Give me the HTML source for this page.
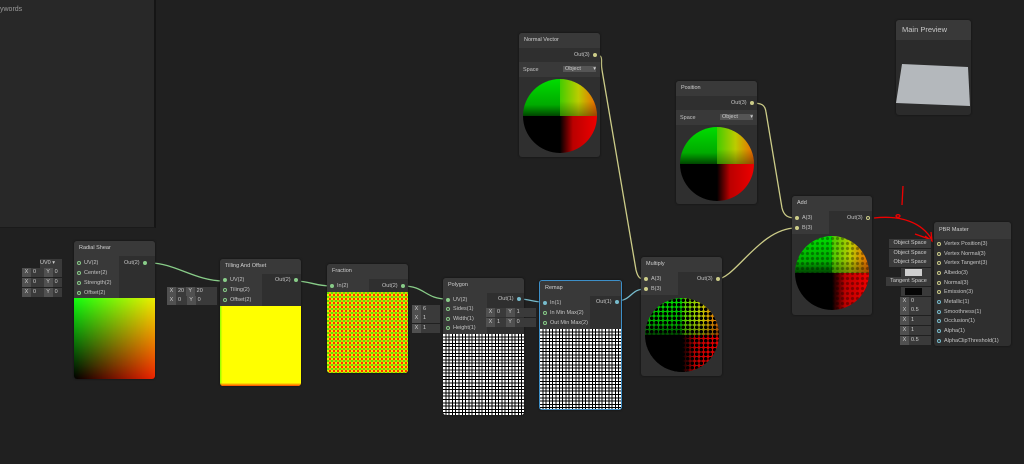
<!DOCTYPE html><html><head><style>
*{margin:0;padding:0;box-sizing:border-box}
body{width:1024px;height:464px;background:#202020;position:relative;overflow:hidden;font-family:"Liberation Sans",sans-serif;font-size:5.5px;color:#c4c4c4}
.a{position:absolute}
.node{position:absolute;background:#2f2f2f;border-radius:3px;overflow:hidden;box-shadow:0 0 2px #111}
.hd{height:15px;background:#393939;line-height:15px;padding-left:5px;color:#d0d0d0;font-size:5.5px}
.in{position:absolute;left:0;background:#393939}
.row{position:absolute;height:10px;line-height:10px;white-space:nowrap}
.p{display:inline-block;width:4px;height:4px;border-radius:50%;border:1px solid #8c8;vertical-align:middle;margin-right:3px}
.pf{background:#8c8}
.py{border-color:#cc8}.pyf{background:#cc8;border-color:#cc8}
.pb{border-color:#7bc}.pbf{background:#7bc;border-color:#7bc}
.fld{position:absolute;height:9px;background:#3a3a3a;line-height:9px;color:#ccc;font-size:5.5px}
.fld b{display:inline-block;width:9px;text-align:center;background:#505050;font-weight:normal;margin-right:2px}
.sph{position:absolute;border-radius:50%;overflow:hidden}
.sph i{position:absolute;width:50%;height:50%}
.tl{left:0;top:0;background:linear-gradient(to bottom,#0d0,#0a0 70%,#040)}
.tr{right:0;top:0;background:linear-gradient(to bottom,transparent 60%,rgba(0,0,0,.35)),linear-gradient(to right,#4c0,#bc0 50%,#e60)}
.bl{left:0;bottom:0;background:#000}
.br{right:0;bottom:0;background:linear-gradient(to right,#000,#b00 35%,#e00)}
.dots{position:absolute;inset:0}
.grid{background:repeating-linear-gradient(to right,transparent 0,transparent 2.3px,#000 2.3px,#000 3.3px),repeating-linear-gradient(to bottom,#fff 0,#fff 2.3px,#000 2.3px,#000 3.3px)}
</style></head><body>
<div class="a" style="left:0;top:0;width:156px;height:228px;background:#282828;border-right:2px solid #151515;border-bottom:1px solid #1a1a1a"></div>
<div class="a" style="left:0;top:6px;color:#9a9a9a;font-size:7px">ywords</div>

<svg class="a" style="left:0;top:0" width="1024" height="464">
<g fill="none" stroke-width="1.3">
<path d="M150 263 C175 263 195 281 224 281" stroke="#8c8"/>
<path d="M295 281 C310 281 315 286 331 286" stroke="#8c8"/>
<path d="M403 286 C425 286 425 299 447 299" stroke="#8c8"/>
<path d="M519 299 C530 299 532 302 543 302" stroke="#7bc"/>
<path d="M616 301 C632 301 630 289 645 289" stroke="#7bc"/>
<path d="M595 55 C605 55 600 60 602 70 L636 270 C638 278 640 279 645 279" stroke="#cc8"/>
<path d="M752 103 C762 103 765 105 766 112 L782 208 C784 216 788 218 796 218" stroke="#cc8"/>
<path d="M717 279 C735 279 760 228 796 228" stroke="#cc8"/>
</g>
<g fill="none" stroke="#e00" stroke-width="1.3">
<path d="M874 218 C900 215 922 222 932 240"/>
<path d="M925 236 L932 241 L931 232"/>
<path d="M903 186 L902 205"/>
<ellipse cx="898" cy="216" rx="2" ry="1.3"/>
<path d="M915 234 L932 240"/>
</g>
</svg>

<!-- Radial Shear -->
<div class="node" style="left:74px;top:241px;width:81px;height:138px">
<div class="hd">Radial Shear</div>
<div class="in" style="top:15px;width:45px;height:42px"></div>
<div class="row" style="left:3px;top:17px"><span class="p"></span>UV(2)</div>
<div class="row" style="left:3px;top:27px"><span class="p"></span>Center(2)</div>
<div class="row" style="left:3px;top:37px"><span class="p"></span>Strength(2)</div>
<div class="row" style="left:3px;top:47px"><span class="p"></span>Offset(2)</div>
<div class="row" style="left:50px;top:17px">Out(2) <span class="p pf" style="margin:0 0 0 2px"></span></div>
<div class="a" style="left:0;top:57px;width:81px;height:81px;background:linear-gradient(to bottom,#1f1,#000)"></div>
<div class="a" style="left:0;top:57px;width:81px;height:81px;background:linear-gradient(to bottom,#ee0,#e20);-webkit-mask-image:linear-gradient(to right,transparent,#000);mask-image:linear-gradient(to right,transparent,#000)"></div>
</div>
<div class="fld" style="left:40px;top:259px;width:22px"> UV0 ▾</div>
<div class="fld" style="left:22px;top:268px;width:40px"><b>X</b>0 <b style="margin-left:6px">Y</b>0</div>
<div class="fld" style="left:22px;top:278px;width:40px"><b>X</b>0 <b style="margin-left:6px">Y</b>0</div>
<div class="fld" style="left:22px;top:288px;width:40px"><b>X</b>0 <b style="margin-left:6px">Y</b>0</div>

<!-- Tiling -->
<div class="node" style="left:220px;top:259px;width:81px;height:127px">
<div class="hd">Tilling And Offset</div>
<div class="in" style="top:15px;width:42px;height:32px"></div>
<div class="row" style="left:3px;top:16px"><span class="p pf"></span>UV(2)</div>
<div class="row" style="left:3px;top:26px"><span class="p"></span>Tiling(2)</div>
<div class="row" style="left:3px;top:36px"><span class="p"></span>Offset(2)</div>
<div class="row" style="left:55px;top:16px">Out(2) <span class="p pf" style="margin:0 0 0 2px"></span></div>
<div class="a" style="left:0;top:47px;width:81px;height:80px;background:linear-gradient(to bottom,transparent 96%,#f40),linear-gradient(to right,#8f0,#ff0 3%,#ff0)"></div>
</div>
<div class="fld" style="left:167px;top:287px;width:50px"><b>X</b>20 <b>Y</b>20</div>
<div class="fld" style="left:167px;top:296px;width:50px"><b>X</b>0 <b style="margin-left:4px">Y</b>0</div>

<!-- Fraction -->
<div class="node" style="left:327px;top:264px;width:81px;height:109px">
<div class="hd">Fraction</div>
<div class="in" style="top:15px;width:42px;height:13px"></div>
<div class="row" style="left:3px;top:17px"><span class="p pf"></span>In(2)</div>
<div class="row" style="left:55px;top:17px">Out(2) <span class="p pf" style="margin:0 0 0 2px"></span></div>
<div class="a" style="left:0;top:28px;width:81px;height:81px;background:repeating-linear-gradient(to bottom,#6d0 0,#6d0 2px,#ee0 2px,#ee0 4px)"></div>
<div class="a" style="left:0;top:28px;width:81px;height:81px;background:repeating-linear-gradient(to bottom,#dc0 0,#dc0 2px,#f30 2px,#f30 4px);-webkit-mask-image:repeating-linear-gradient(to right,transparent 0,transparent 2px,#000 2px,#000 4px);mask-image:repeating-linear-gradient(to right,transparent 0,transparent 2px,#000 2px,#000 4px)"></div>
</div>

<!-- Polygon -->
<div class="node" style="left:443px;top:278px;width:81px;height:137px">
<div class="hd">Polygon</div>
<div class="in" style="top:15px;width:44px;height:41px"></div>
<div class="row" style="left:3px;top:17px"><span class="p pf"></span>UV(2)</div>
<div class="row" style="left:3px;top:26px"><span class="p"></span>Sides(1)</div>
<div class="row" style="left:3px;top:36px"><span class="p"></span>Width(1)</div>
<div class="row" style="left:3px;top:45px"><span class="p"></span>Height(1)</div>
<div class="row" style="left:55px;top:16px">Out(1) <span class="p pbf" style="margin:0 0 0 2px"></span></div>
<div class="a grid" style="left:0;top:56px;width:81px;height:81px"></div>
</div>
<div class="fld" style="left:412px;top:305px;width:28px"><b>X</b>6</div>
<div class="fld" style="left:412px;top:314px;width:28px"><b>X</b>1</div>
<div class="fld" style="left:412px;top:324px;width:28px"><b>X</b>1</div>

<!-- Remap -->
<div class="node" style="left:539px;top:280px;width:83px;height:130px;border:1px solid #3d8fc8">
<div class="hd">Remap</div>
<div class="in" style="top:15px;width:50px;height:33px"></div>
<div class="row" style="left:3px;top:17px"><span class="p pbf"></span>In(1)</div>
<div class="row" style="left:3px;top:27px"><span class="p"></span>In Min Max(2)</div>
<div class="row" style="left:3px;top:37px"><span class="p"></span>Out Min Max(2)</div>
<div class="row" style="left:56px;top:16px">Out(1) <span class="p pbf" style="margin:0 0 0 2px"></span></div>
<div class="a grid" style="left:0;top:48px;width:81px;height:81px"></div>
</div>
<div class="fld" style="left:486px;top:308px;width:50px"><b>X</b>0 <b style="margin-left:4px">Y</b>1</div>
<div class="fld" style="left:486px;top:318px;width:50px"><b>X</b>1 <b style="margin-left:4px">Y</b>0</div>

<!-- Normal Vector -->
<div class="node" style="left:519px;top:33px;width:81px;height:124px">
<div class="hd">Normal Vector</div>
<div class="row" style="left:55px;top:17px">Out(3) <span class="p pyf" style="margin:0 0 0 2px"></span></div>
<div class="a" style="left:0;top:29px;width:81px;height:15px;background:#393939"></div>
<div class="row" style="left:4px;top:32px">Space</div>
<div class="fld" style="left:44px;top:33px;width:33px;height:6px;line-height:6px;background:#555;padding-left:2px">Object <span style="float:right">▾</span></div>
<div class="sph" style="left:4px;top:46px;width:74px;height:74px"><i class="tl"></i><i class="tr"></i><i class="bl"></i><i class="br"></i></div>
</div>

<!-- Position -->
<div class="node" style="left:676px;top:81px;width:81px;height:123px">
<div class="hd">Position</div>
<div class="row" style="left:55px;top:17px">Out(3) <span class="p pyf" style="margin:0 0 0 2px"></span></div>
<div class="a" style="left:0;top:29px;width:81px;height:15px;background:#393939"></div>
<div class="row" style="left:4px;top:32px">Space</div>
<div class="fld" style="left:44px;top:33px;width:33px;height:6px;line-height:6px;background:#555;padding-left:2px">Object <span style="float:right">▾</span></div>
<div class="sph" style="left:4px;top:46px;width:74px;height:74px"><i class="tl"></i><i class="tr"></i><i class="bl"></i><i class="br"></i></div>
</div>

<!-- Multiply -->
<div class="node" style="left:641px;top:257px;width:81px;height:119px">
<div class="hd">Multiply</div>
<div class="in" style="top:15px;width:37px;height:23px"></div>
<div class="row" style="left:3px;top:17px"><span class="p pyf"></span>A(3)</div>
<div class="row" style="left:3px;top:27px"><span class="p pyf"></span>B(3)</div>
<div class="row" style="left:56px;top:17px">Out(3) <span class="p pyf" style="margin:0 0 0 2px"></span></div>
<div class="sph" style="left:4px;top:41px;width:74px;height:74px"><i class="tl"></i><i class="tr"></i><i class="bl"></i><i class="br"></i><div class="dots" style="background:radial-gradient(circle,#000 1.6px,transparent 2px);background-size:4.5px 4.5px"></div></div>
</div>

<!-- Add -->
<div class="node" style="left:792px;top:196px;width:80px;height:119px">
<div class="hd">Add</div>
<div class="in" style="top:15px;width:37px;height:23px"></div>
<div class="row" style="left:3px;top:17px"><span class="p pyf"></span>A(3)</div>
<div class="row" style="left:3px;top:27px"><span class="p pyf"></span>B(3)</div>
<div class="row" style="left:55px;top:17px">Out(3) <span class="p py" style="margin:0 0 0 2px"></span></div>
<div class="sph" style="left:3px;top:40px;width:74px;height:74px"><i class="tl"></i><i class="tr"></i><i class="bl"></i><i class="br"></i><div class="dots" style="background:radial-gradient(circle,rgba(0,0,0,.35) 1.3px,transparent 1.9px);background-size:5px 5px"></div></div>
</div>

<!-- PBR Master -->
<div class="node" style="left:934px;top:222px;width:77px;height:124px">
<div class="hd" style="height:17px;line-height:17px">PBR Master</div>
<div class="row" style="left:3px;top:17px"><span class="p py"></span>Vertex Position(3)</div>
<div class="row" style="left:3px;top:27px"><span class="p py"></span>Vertex Normal(3)</div>
<div class="row" style="left:3px;top:36px"><span class="p py"></span>Vertex Tangent(3)</div>
<div class="row" style="left:3px;top:46px"><span class="p py"></span>Albedo(3)</div>
<div class="row" style="left:3px;top:56px"><span class="p py"></span>Normal(3)</div>
<div class="row" style="left:3px;top:65px"><span class="p py"></span>Emission(3)</div>
<div class="row" style="left:3px;top:75px"><span class="p pb"></span>Metallic(1)</div>
<div class="row" style="left:3px;top:85px"><span class="p pb"></span>Smoothness(1)</div>
<div class="row" style="left:3px;top:94px"><span class="p pb"></span>Occlusion(1)</div>
<div class="row" style="left:3px;top:104px"><span class="p pb"></span>Alpha(1)</div>
<div class="row" style="left:3px;top:114px"><span class="p pb"></span>AlphaClipThreshold(1)</div>
</div>
<div class="fld" style="left:889px;top:239px;width:42px;text-align:center">Object Space</div>
<div class="fld" style="left:889px;top:249px;width:42px;text-align:center">Object Space</div>
<div class="fld" style="left:889px;top:258px;width:42px;text-align:center">Object Space</div>
<div class="fld" style="left:901px;top:268px;width:30px"><span class="a" style="left:4px;top:1px;width:17px;height:7px;background:#d0d0d0"></span></div>
<div class="fld" style="left:886px;top:277px;width:45px;text-align:center">Tangent Space</div>
<div class="fld" style="left:901px;top:287px;width:30px"><span class="a" style="left:4px;top:1px;width:17px;height:7px;background:#050505"></span></div>
<div class="fld" style="left:900px;top:297px;width:31px"><b>X</b>0</div>
<div class="fld" style="left:900px;top:306px;width:31px"><b>X</b>0.5</div>
<div class="fld" style="left:900px;top:316px;width:31px"><b>X</b>1</div>
<div class="fld" style="left:900px;top:326px;width:31px"><b>X</b>1</div>
<div class="fld" style="left:900px;top:336px;width:31px"><b>X</b>0.5</div>

<!-- Main Preview -->
<div class="node" style="left:896px;top:20px;width:75px;height:95px;background:#2b2b2b">
<div class="a" style="left:0;top:0;width:75px;height:20px;background:#393939;line-height:20px;padding-left:6px;font-size:7.5px;color:#c8c8c8">Main Preview</div>
<svg class="a" style="left:0;top:20px" width="75" height="75"><polygon points="6,24 72,27 74,66 0,63" fill="#b4b8bc"/><rect x="66" y="82" width="6" height="1" fill="#888"/></svg>
</div>
</body></html>
